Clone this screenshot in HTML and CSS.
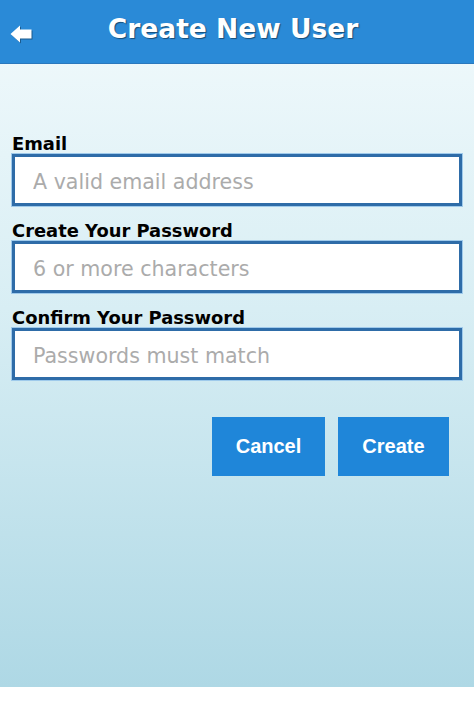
FILE: index.html
```html
<!DOCTYPE html>
<html>
<head>
<meta charset="utf-8">
<link rel="stylesheet" href="styles.css">
</head>
<body>
<div class="app">
  <header class="topbar">
    <button class="back" aria-label="Back">
      <svg width="22" height="18" viewBox="0 0 22 18">
        <path d="M0.5 9 L10 0.5 L10 4.5 L21.5 4.5 L21.5 13.5 L10 13.5 L10 17.5 Z" fill="#fff"/>
      </svg>
    </button>
    <h1 class="title">Create New User</h1>
  </header>
  <main class="content">
    <form class="form">
      <div class="field">
        <label class="label">Email</label>
        <input class="input" type="text" placeholder="A valid email address">
      </div>
      <div class="field">
        <label class="label">Create Your Password</label>
        <input class="input" type="text" placeholder="6 or more characters">
      </div>
      <div class="field">
        <label class="label">Confirm Your Password</label>
        <input class="input" type="text" placeholder="Passwords must match">
      </div>
      <div class="actions">
        <button type="button" class="btn btn-cancel">Cancel</button>
        <button type="button" class="btn btn-create">Create</button>
      </div>
    </form>
  </main>
</div>
</body>
</html>
```
FILE: styles.css
```css
html, body {
  margin: 0;
  padding: 0;
  background: #ffffff;
}
.app {
  width: 474px;
  height: 687px;
  display: flex;
  flex-direction: column;
  background: linear-gradient(to bottom, #f2fafc 0%, #d8eef4 45%, #aed8e5 100%);
  font-family: "DejaVu Sans", Verdana, sans-serif;
}
.topbar {
  height: 63px;
  flex: none;
  background: #2a8ad7;
  border-bottom: 1px solid #2a78bd;
  display: flex;
  align-items: center;
  position: relative;
}
.back {
  position: absolute;
  left: 10px;
  top: 25px;
  padding: 0;
  margin: 0;
  border: none;
  background: none;
  width: 22px;
  height: 18px;
  filter: drop-shadow(1px 1px 0 rgba(0,0,0,0.35));
}
.back svg { display: block; }
.title {
  margin: 0;
  width: 100%;
  text-align: center;
  padding-right: 8px;
  padding-bottom: 7px;
  color: #ffffff;
  font-size: 26.5px;
  font-weight: bold;
  text-shadow: 1px 1px 1px rgba(0,0,0,0.45);
}
.content {
  padding: 69px 12px 0 12px;
}
.form {
  display: flex;
  flex-direction: column;
}
.field {
  display: flex;
  flex-direction: column;
  margin-bottom: 14px;
}
.label {
  font-size: 17.9px;
  line-height: 21px;
  font-weight: bold;
  color: #000;
}
.input {
  box-sizing: border-box;
  width: 450px;
  height: 52px;
  margin: 0;
  border: 3px solid #2e6ca8;
  box-shadow: 0 0 0 1px #9fcaeb;
  background: #ffffff;
  padding: 3px 0 0 18px;
  font-family: "DejaVu Sans", Verdana, sans-serif;
  font-size: 20.6px;
  color: #333;
  outline: none;
}
.input::placeholder {
  color: #ababab;
}
.actions {
  display: flex;
  justify-content: flex-end;
  gap: 13px;
  margin-top: 23px;
  padding-right: 13px;
}
.btn {
  height: 59px;
  border: none;
  margin: 0;
  background: #1f86d9;
  color: #ffffff;
  font-family: "Liberation Sans", Arial, sans-serif;
  font-weight: bold;
  font-size: 20px;
  padding: 0;
}
.btn-cancel { width: 113px; }
.btn-create { width: 111px; }
```
